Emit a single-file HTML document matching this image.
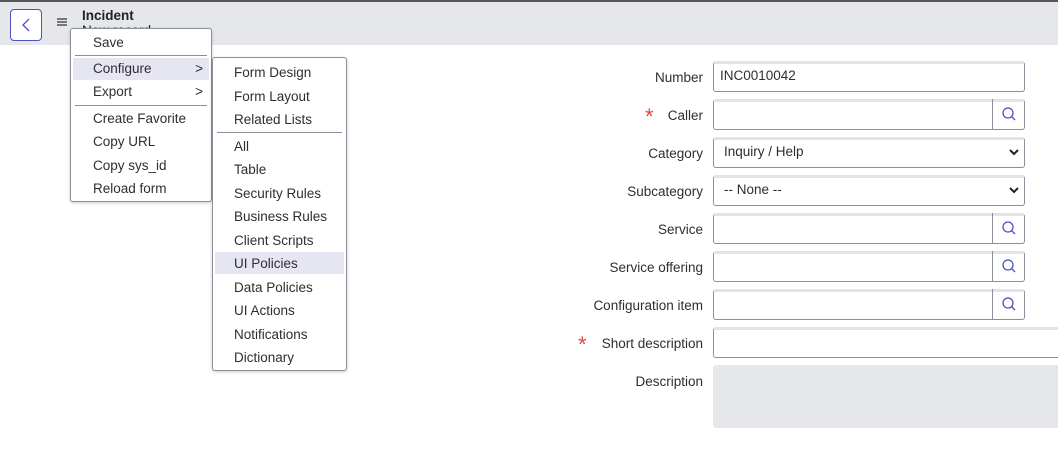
<html><head><style>
body{margin:0;width:1058px;height:462px;background:#fff;font-family:"Liberation Sans",sans-serif;font-size:13.5px;color:#2e2e2e;position:relative;overflow:hidden}
.hdr{position:absolute;left:0;top:0;width:1058px;height:45px;background:#e6e7ea;border-top:2px solid #555;box-sizing:border-box;overflow:hidden}
.back{position:absolute;left:10px;top:7px;width:30px;height:30px;border:1px solid #4f52bd;border-radius:4px;background:#fff}
.menu{position:absolute;background:#fff;border:1px solid #8a8f99;border-radius:3px;box-shadow:0 1px 3px rgba(0,0,0,.2);box-sizing:border-box}
.it{position:absolute;left:0;right:0;height:22px;line-height:22px}
.sep{position:absolute;height:1px;background:#8a8f99}
.lbl{position:absolute;right:355px;text-align:right;font-size:13.5px}
.inp{position:absolute;left:713px;width:312px;height:31px;border:1px solid #8a8f99;border-radius:3px;box-sizing:border-box;background:#fff;border-top:3px solid #e2e3e6}
.inp span{position:absolute;left:6px;top:4px}
.sb{position:absolute;right:0;top:-3px;width:31px;height:31px;border-left:1px solid #8a8f99}
.star{color:#e0483b;font-size:22px;position:absolute;font-weight:300}
</style></head><body>
<div class="hdr">
<div class="back"><svg width="30" height="30"><path d="M18 9 L12 15 L18 21" fill="none" stroke="#4f52bd" stroke-width="1.3"/></svg></div>
<svg style="position:absolute;left:56px;top:15px" width="12" height="10"><path d="M1 2H11M1 5H11M1 8H11" stroke="#333" stroke-width="1.2"/></svg>
<div style="position:absolute;left:82px;top:6px;font-weight:bold;font-size:13.5px;color:#222">Incident</div>
<div style="position:absolute;left:82px;top:21px;font-size:13.5px;color:#222">New record</div>
</div>
<div class="menu" style="left:70px;top:28px;width:142px;height:174px">
<div class="it" style="top:3px;padding-left:22px">Save</div>
<div class="sep" style="left:4px;right:4px;top:26px"></div>
<div class="it" style="top:29px;left:2px;right:2px;background:#e6e6f3;padding-left:20px">Configure<span style="position:absolute;right:6px">&gt;</span></div>
<div class="it" style="top:52px;padding-left:22px">Export<span style="position:absolute;right:8px">&gt;</span></div>
<div class="sep" style="left:4px;right:4px;top:76px"></div>
<div class="it" style="top:79px;padding-left:22px">Create Favorite</div>
<div class="it" style="top:102px;padding-left:22px">Copy URL</div>
<div class="it" style="top:126px;padding-left:22px">Copy sys_id</div>
<div class="it" style="top:149px;padding-left:22px">Reload form</div>
</div>
<div class="menu" style="left:212px;top:57px;width:135px;height:314px">
<div class="it" style="top:4px;padding-left:21px">Form Design</div>
<div class="it" style="top:28px;padding-left:21px">Form Layout</div>
<div class="it" style="top:51px;padding-left:21px">Related Lists</div>
<div class="sep" style="left:4px;right:4px;top:74px"></div>
<div class="it" style="top:78px;padding-left:21px">All</div>
<div class="it" style="top:101px;padding-left:21px">Table</div>
<div class="it" style="top:125px;padding-left:21px">Security Rules</div>
<div class="it" style="top:148px;padding-left:21px">Business Rules</div>
<div class="it" style="top:172px;padding-left:21px">Client Scripts</div>
<div class="it" style="top:194px;left:2px;right:2px;background:#e6e6f3;padding-left:19px;line-height:24px">UI Policies</div>
<div class="it" style="top:219px;padding-left:21px">Data Policies</div>
<div class="it" style="top:242px;padding-left:21px">UI Actions</div>
<div class="it" style="top:266px;padding-left:21px">Notifications</div>
<div class="it" style="top:289px;padding-left:21px">Dictionary</div>
</div>

<div class="lbl" style="top:70px">Number</div>
<div class="inp" style="top:61px"><span>INC0010042</span></div>
<div class="star" style="left:645px;top:104px">*</div><div class="lbl" style="top:108px">Caller</div>
<div class="inp" style="top:99px"><div class="sb"><svg width="31" height="31"><circle cx="15" cy="14" r="5" fill="none" stroke="#4f52bd" stroke-width="1.3"/><path d="M18.5 17.5L22 21" stroke="#4f52bd" stroke-width="1.3"/></svg></div></div>
<div class="lbl" style="top:146px">Category</div>
<div class="inp" style="top:137px"><span style="left:10px">Inquiry / Help</span><svg style="position:absolute;right:5px;top:8px" width="10" height="8"><path d="M1 2L5 6L9 2" fill="none" stroke="#222" stroke-width="2"/></svg></div>
<div class="lbl" style="top:184px">Subcategory</div>
<div class="inp" style="top:175px"><span style="left:10px">-- None --</span><svg style="position:absolute;right:5px;top:8px" width="10" height="8"><path d="M1 2L5 6L9 2" fill="none" stroke="#222" stroke-width="2"/></svg></div>
<div class="lbl" style="top:222px">Service</div>
<div class="inp" style="top:213px"><div class="sb"><svg width="31" height="31"><circle cx="15" cy="14" r="5" fill="none" stroke="#4f52bd" stroke-width="1.3"/><path d="M18.5 17.5L22 21" stroke="#4f52bd" stroke-width="1.3"/></svg></div></div>
<div class="lbl" style="top:260px">Service offering</div>
<div class="inp" style="top:251px"><div class="sb"><svg width="31" height="31"><circle cx="15" cy="14" r="5" fill="none" stroke="#4f52bd" stroke-width="1.3"/><path d="M18.5 17.5L22 21" stroke="#4f52bd" stroke-width="1.3"/></svg></div></div>
<div class="lbl" style="top:298px">Configuration item</div>
<div class="inp" style="top:289px"><div class="sb"><svg width="31" height="31"><circle cx="15" cy="14" r="5" fill="none" stroke="#4f52bd" stroke-width="1.3"/><path d="M18.5 17.5L22 21" stroke="#4f52bd" stroke-width="1.3"/></svg></div></div>
<div class="star" style="left:578px;top:332px">*</div><div class="lbl" style="top:336px">Short description</div>
<div class="inp" style="top:327px;width:360px"></div>
<div class="lbl" style="top:374px">Description</div>
<div style="position:absolute;left:713px;top:365px;width:360px;height:63px;background:#e6e7ea;border-radius:3px"></div>
</body></html>
